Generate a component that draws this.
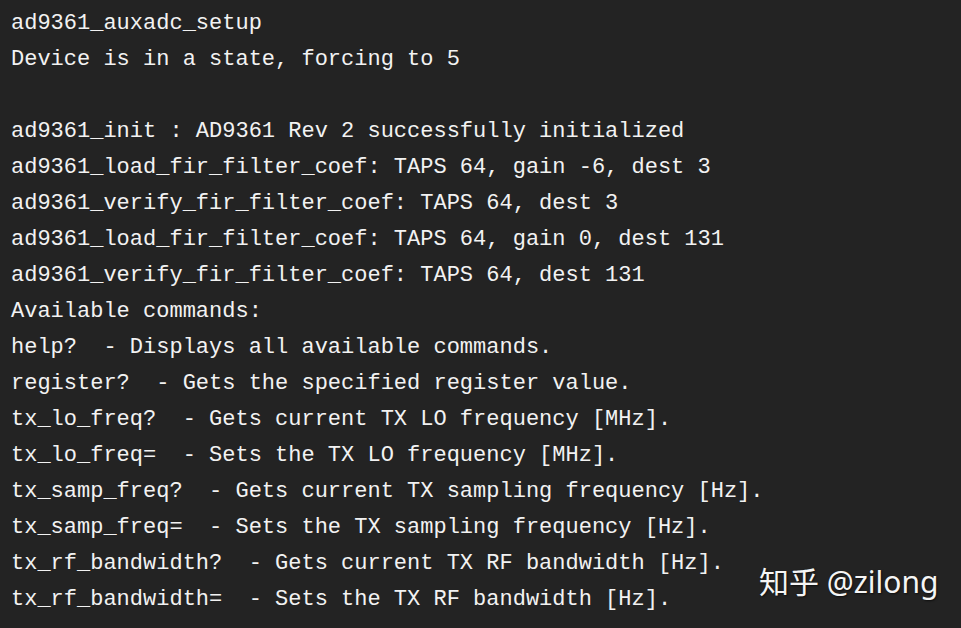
export default function App() {
  const lines = [
    "ad9361_auxadc_setup",
    "Device is in a state, forcing to 5",
    "",
    "ad9361_init : AD9361 Rev 2 successfully initialized",
    "ad9361_load_fir_filter_coef: TAPS 64, gain -6, dest 3",
    "ad9361_verify_fir_filter_coef: TAPS 64, dest 3",
    "ad9361_load_fir_filter_coef: TAPS 64, gain 0, dest 131",
    "ad9361_verify_fir_filter_coef: TAPS 64, dest 131",
    "Available commands:",
    "help?  - Displays all available commands.",
    "register?  - Gets the specified register value.",
    "tx_lo_freq?  - Gets current TX LO frequency [MHz].",
    "tx_lo_freq=  - Sets the TX LO frequency [MHz].",
    "tx_samp_freq?  - Gets current TX sampling frequency [Hz].",
    "tx_samp_freq=  - Sets the TX sampling frequency [Hz].",
    "tx_rf_bandwidth?  - Gets current TX RF bandwidth [Hz].",
    "tx_rf_bandwidth=  - Sets the TX RF bandwidth [Hz].",
  ];
  return (
    <div className="relative w-[961px] h-[628px] overflow-hidden bg-[#232323]">
      <div className="pt-[6px] pl-[11px] font-['Liberation_Mono',monospace] text-[22px] leading-[36px] text-[#f2f2f2] whitespace-pre">
        {lines.map((l, i) => (
          <div key={i} className="h-[36px]">{l}</div>
        ))}
      </div>
      <div className="absolute left-[759px] top-[562px] font-['Noto_Sans','Noto_Sans_CJK_SC',sans-serif] text-[30px] leading-[40px] text-[#f5f5f5] [text-shadow:1px_1px_2px_rgba(0,0,0,0.6)] whitespace-pre">
        知乎 @zilong
      </div>
    </div>
  );
}
